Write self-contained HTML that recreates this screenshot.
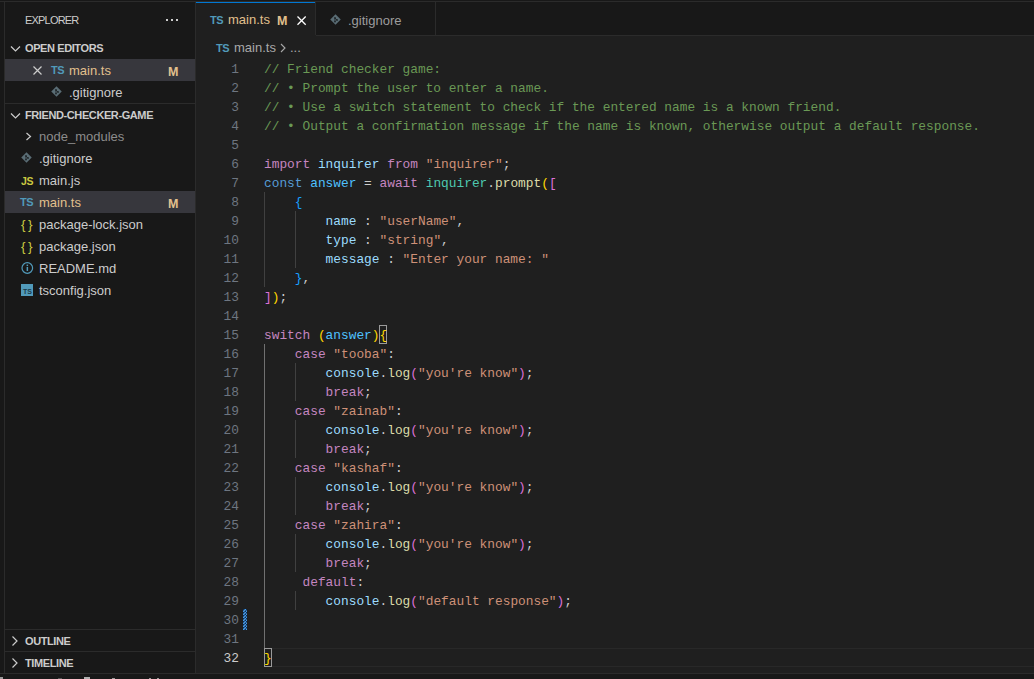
<!DOCTYPE html>
<html><head><meta charset="utf-8">
<style>
*{margin:0;padding:0;box-sizing:border-box}
html,body{width:1034px;height:679px;overflow:hidden;background:#181818}
body{position:relative;font-family:"Liberation Sans",sans-serif;color:#cccccc}
.a{position:absolute;white-space:nowrap}
.t13{font-size:13px;line-height:22px;height:22px}
.hdr{font-size:11px;font-weight:bold;color:#cccccc;line-height:22px;height:22px;letter-spacing:-0.4px}
.mod{color:#e2c08d}
.tsi{color:#519aba;font-weight:bold;font-size:11px;line-height:22px;letter-spacing:-0.5px}
.code{position:absolute;left:264px;font-family:"Liberation Mono",monospace;font-size:12.83px;white-space:pre;height:19px;line-height:19px;margin-top:1px}
.ln{position:absolute;left:196px;width:43px;text-align:right;font-family:"Liberation Mono",monospace;font-size:12.83px;color:#6e7681;height:19px;line-height:19px;margin-top:1px}
.c{color:#6a9955}.k{color:#569cd6}.p{color:#c586c0}.s{color:#ce9178}.v{color:#9cdcfe}.f{color:#dcdcaa}.cl{color:#4ec9b0}.cn{color:#4fc1ff}
.b1{color:#ffd700}.b2{color:#da70d6}.b3{color:#179fff}.w{color:#cccccc}
.act{color:#cccccc}
.g{position:absolute;width:1px;background:#404040}
svg{position:absolute;overflow:visible}
</style></head><body>
<!-- window top border -->
<div class="a" style="left:0;top:1px;width:1034px;height:1px;background:#2b2b2b"></div>
<!-- left border -->
<div class="a" style="left:4px;top:1px;width:1px;height:672px;background:#2b2b2b"></div>
<!-- sidebar right border -->
<div class="a" style="left:195px;top:1px;width:1px;height:672px;background:#2b2b2b"></div>

<!-- SIDEBAR -->
<div class="a t13" style="left:25px;top:9px;font-size:11px;letter-spacing:-0.8px">EXPLORER</div>
<div class="a" style="left:166px;top:19px;width:2px;height:2px;background:#cccccc"></div>
<div class="a" style="left:171px;top:19px;width:2px;height:2px;background:#cccccc"></div>
<div class="a" style="left:176px;top:19px;width:2px;height:2px;background:#cccccc"></div>

<svg style="left:10px;top:44.5px" width="12" height="8"><polyline points="1,1.5 5.5,6 10,1.5" fill="none" stroke="#cccccc" stroke-width="1.2"/></svg>
<div class="a hdr" style="left:25px;top:37px">OPEN EDITORS</div>

<div class="a" style="left:5px;top:59px;width:190px;height:22px;background:#37373d"></div>
<svg style="left:33px;top:66px" width="9" height="9"><path d="M0.5,0.5 L8.5,8.5 M8.5,0.5 L0.5,8.5" stroke="#cccccc" stroke-width="1.2"/></svg>
<div class="a tsi" style="left:51px;top:59px">TS</div>
<div class="a t13 mod" style="left:69px;top:60px">main.ts</div>
<div class="a t13 mod" style="left:168px;top:61px;font-weight:bold;font-size:12.5px">M</div>

<svg style="left:51px;top:86px" width="11" height="11"><rect x="1.8" y="1.8" width="7.4" height="7.4" transform="rotate(45 5.5 5.5)" fill="#5a6d75"/><circle cx="5" cy="4" r="0.9" fill="#1f2428"/><circle cx="7" cy="6" r="0.9" fill="#1f2428"/><circle cx="5" cy="7.6" r="0.9" fill="#1f2428"/><path d="M5,4 L5,7.6 M5,4 L7,6" stroke="#1f2428" stroke-width="0.9"/></svg>
<div class="a t13" style="left:69px;top:82px">.gitignore</div>

<div class="a" style="left:5px;top:103px;width:190px;height:1px;background:#2b2b2b"></div>
<svg style="left:10px;top:111.5px" width="12" height="8"><polyline points="1,1.5 5.5,6 10,1.5" fill="none" stroke="#cccccc" stroke-width="1.2"/></svg>
<div class="a hdr" style="left:25px;top:104px">FRIEND-CHECKER-GAME</div>

<svg style="left:25px;top:132px" width="8" height="10"><polyline points="1.5,1 5.5,4.5 1.5,8" fill="none" stroke="#cccccc" stroke-width="1.2"/></svg>
<div class="a t13" style="left:39px;top:126px;color:#8c8c8c">node_modules</div>

<svg style="left:21px;top:152px" width="11" height="11"><rect x="1.8" y="1.8" width="7.4" height="7.4" transform="rotate(45 5.5 5.5)" fill="#5a6d75"/><circle cx="5" cy="4" r="0.9" fill="#1f2428"/><circle cx="7" cy="6" r="0.9" fill="#1f2428"/><circle cx="5" cy="7.6" r="0.9" fill="#1f2428"/><path d="M5,4 L5,7.6 M5,4 L7,6" stroke="#1f2428" stroke-width="0.9"/></svg>
<div class="a t13" style="left:39px;top:148px">.gitignore</div>

<div class="a" style="left:21px;top:170px;color:#cbcb41;font-weight:bold;font-size:10.5px;line-height:22px;letter-spacing:-0.4px">JS</div>
<div class="a t13" style="left:39px;top:170px">main.js</div>

<div class="a" style="left:5px;top:191px;width:190px;height:22px;background:#37373d"></div>
<div class="a tsi" style="left:20px;top:191px">TS</div>
<div class="a t13 mod" style="left:39px;top:192px">main.ts</div>
<div class="a t13 mod" style="left:168px;top:193px;font-weight:bold;font-size:12.5px">M</div>

<div class="a" style="left:21px;top:214px;color:#cbcb41;font-size:13.5px;line-height:22px;letter-spacing:2.5px;font-weight:normal">{}</div>
<div class="a t13" style="left:39px;top:214px">package-lock.json</div>
<div class="a" style="left:21px;top:236px;color:#cbcb41;font-size:13.5px;line-height:22px;letter-spacing:2.5px;font-weight:normal">{}</div>
<div class="a t13" style="left:39px;top:236px">package.json</div>

<svg style="left:21px;top:262px" width="13" height="13"><circle cx="6.3" cy="6" r="5.3" fill="none" stroke="#519aba" stroke-width="1.2"/><rect x="5.6" y="2.6" width="1.5" height="1.5" fill="#519aba"/><rect x="5.6" y="5" width="1.5" height="4" fill="#519aba"/></svg>
<div class="a t13" style="left:39px;top:258px">README.md</div>

<div class="a" style="left:21px;top:284px;width:12px;height:12px;background:#519aba"></div>
<div class="a" style="left:23px;top:288px;color:#1b3a4b;font-size:7px;line-height:8px;font-weight:bold">TS</div>
<div class="a t13" style="left:39px;top:280px">tsconfig.json</div>

<div class="a" style="left:5px;top:629px;width:190px;height:1px;background:#2b2b2b"></div>
<svg style="left:11px;top:636px" width="8" height="10"><polyline points="1.5,0.5 6,5 1.5,9.5" fill="none" stroke="#cccccc" stroke-width="1.2"/></svg>
<div class="a hdr" style="left:25px;top:630px">OUTLINE</div>
<div class="a" style="left:5px;top:651px;width:190px;height:1px;background:#2b2b2b"></div>
<svg style="left:11px;top:658px" width="8" height="10"><polyline points="1.5,0.5 6,5 1.5,9.5" fill="none" stroke="#cccccc" stroke-width="1.2"/></svg>
<div class="a hdr" style="left:25px;top:652px">TIMELINE</div>

<!-- TABS -->
<div class="a" style="left:196px;top:2px;width:838px;height:33px;background:#181818"></div>
<div class="a" style="left:196px;top:35px;width:838px;height:1px;background:#2b2b2b"></div>
<div class="a" style="left:196px;top:2px;width:120px;height:34px;background:#1f1f1f"></div>
<div class="a" style="left:196px;top:2px;width:120px;height:1px;background:#0078d4"></div>
<div class="a" style="left:315px;top:2px;width:1px;height:33px;background:#2b2b2b"></div>
<div class="a" style="left:435px;top:2px;width:1px;height:33px;background:#2b2b2b"></div>
<div class="a tsi" style="left:210px;top:9px">TS</div>
<div class="a t13 mod" style="left:228px;top:9px">main.ts</div>
<div class="a t13 mod" style="left:277px;top:10px;font-weight:bold;font-size:12.5px">M</div>
<svg style="left:297px;top:15.5px" width="10" height="10"><path d="M0.5,0.5 L8.7,8.7 M8.7,0.5 L0.5,8.7" stroke="#ffffff" stroke-width="1.3"/></svg>
<svg style="left:330px;top:14px" width="11" height="11"><rect x="1.8" y="1.8" width="7.4" height="7.4" transform="rotate(45 5.5 5.5)" fill="#5a6d75"/><circle cx="5" cy="4" r="0.9" fill="#1f2428"/><circle cx="7" cy="6" r="0.9" fill="#1f2428"/><circle cx="5" cy="7.6" r="0.9" fill="#1f2428"/><path d="M5,4 L5,7.6 M5,4 L7,6" stroke="#1f2428" stroke-width="0.9"/></svg>
<div class="a t13" style="left:348px;top:10px;color:#9d9d9d">.gitignore</div>

<!-- EDITOR -->
<div class="a" style="left:196px;top:36px;width:838px;height:637px;background:#1f1f1f"></div>
<div class="a tsi" style="left:216px;top:37px;">TS</div>
<div class="a t13" style="left:234px;top:37px;color:#a9a9a9">main.ts</div>
<svg style="left:280px;top:43px" width="7" height="10"><polyline points="1,1 5,5 1,9" fill="none" stroke="#a9a9a9" stroke-width="1.1"/></svg>
<div class="a t13" style="left:290px;top:37px;color:#a9a9a9">...</div>

<!-- line highlight -->
<div class="a" style="left:264px;top:648px;width:770px;height:1px;background:#282828"></div>
<div class="a" style="left:264px;top:666px;width:770px;height:1px;background:#282828"></div>
<!-- indent guides -->
<div class="g" style="left:264px;top:192px;height:95px"></div>
<div class="g" style="left:295px;top:211px;height:57px"></div>
<div class="g" style="left:264px;top:344px;height:304px;background:#707070"></div>
<div class="g" style="left:295px;top:363px;height:38px"></div>
<div class="g" style="left:295px;top:420px;height:38px"></div>
<div class="g" style="left:295px;top:477px;height:38px"></div>
<div class="g" style="left:295px;top:534px;height:38px"></div>
<div class="g" style="left:295px;top:591px;height:19px"></div>
<!-- bracket match boxes -->
<div class="a" style="left:379px;top:325px;width:8px;height:19px;border:1px solid #9a9a9a"></div>
<div class="a" style="left:264px;top:648px;width:8px;height:19px;border:1px solid #9a9a9a"></div>
<!-- dirty gutter -->
<svg style="left:243px;top:609px" width="4" height="21"><defs><pattern id="hp" width="3" height="3" patternUnits="userSpaceOnUse"><rect width="3" height="3" fill="#0b2e55"/><path d="M-1,4 L4,-1" stroke="#4a9be6" stroke-width="1.4"/></pattern></defs><rect width="4" height="21" fill="url(#hp)"/></svg>

<div class="ln" style="top:59px">1</div>
<div class="code" style="top:59px"><span class="c">// Friend checker game:</span></div>
<div class="ln" style="top:78px">2</div>
<div class="code" style="top:78px"><span class="c">// • Prompt the user to enter a name.</span></div>
<div class="ln" style="top:97px">3</div>
<div class="code" style="top:97px"><span class="c">// • Use a switch statement to check if the entered name is a known friend.</span></div>
<div class="ln" style="top:116px">4</div>
<div class="code" style="top:116px"><span class="c">// • Output a confirmation message if the name is known, otherwise output a default response.</span></div>
<div class="ln" style="top:135px">5</div>
<div class="ln" style="top:154px">6</div>
<div class="code" style="top:154px"><span class="p">import</span><span class="w"> </span><span class="v">inquirer</span><span class="w"> </span><span class="p">from</span><span class="w"> </span><span class="s">"inquirer"</span><span class="w">;</span></div>
<div class="ln" style="top:173px">7</div>
<div class="code" style="top:173px"><span class="k">const</span><span class="w"> </span><span class="cn">answer</span><span class="w"> = </span><span class="p">await</span><span class="w"> </span><span class="cl">inquirer</span><span class="w">.</span><span class="f">prompt</span><span class="b1">(</span><span class="b2">[</span></div>
<div class="ln" style="top:192px">8</div>
<div class="code" style="top:192px"><span class="w">    </span><span class="b3">{</span></div>
<div class="ln" style="top:211px">9</div>
<div class="code" style="top:211px"><span class="w">        </span><span class="v">name</span><span class="w"> : </span><span class="s">"userName"</span><span class="w">,</span></div>
<div class="ln" style="top:230px">10</div>
<div class="code" style="top:230px"><span class="w">        </span><span class="v">type</span><span class="w"> : </span><span class="s">"string"</span><span class="w">,</span></div>
<div class="ln" style="top:249px">11</div>
<div class="code" style="top:249px"><span class="w">        </span><span class="v">message</span><span class="w"> : </span><span class="s">"Enter your name: "</span></div>
<div class="ln" style="top:268px">12</div>
<div class="code" style="top:268px"><span class="w">    </span><span class="b3">}</span><span class="w">,</span></div>
<div class="ln" style="top:287px">13</div>
<div class="code" style="top:287px"><span class="b2">]</span><span class="b1">)</span><span class="w">;</span></div>
<div class="ln" style="top:306px">14</div>
<div class="ln" style="top:325px">15</div>
<div class="code" style="top:325px"><span class="p">switch</span><span class="w"> </span><span class="b1">(</span><span class="cn">answer</span><span class="b1">)</span><span class="b1 box">{</span></div>
<div class="ln" style="top:344px">16</div>
<div class="code" style="top:344px"><span class="w">    </span><span class="p">case</span><span class="w"> </span><span class="s">"tooba"</span><span class="w">:</span></div>
<div class="ln" style="top:363px">17</div>
<div class="code" style="top:363px"><span class="w">        </span><span class="v">console</span><span class="w">.</span><span class="f">log</span><span class="b2">(</span><span class="s">"you're know"</span><span class="b2">)</span><span class="w">;</span></div>
<div class="ln" style="top:382px">18</div>
<div class="code" style="top:382px"><span class="w">        </span><span class="p">break</span><span class="w">;</span></div>
<div class="ln" style="top:401px">19</div>
<div class="code" style="top:401px"><span class="w">    </span><span class="p">case</span><span class="w"> </span><span class="s">"zainab"</span><span class="w">:</span></div>
<div class="ln" style="top:420px">20</div>
<div class="code" style="top:420px"><span class="w">        </span><span class="v">console</span><span class="w">.</span><span class="f">log</span><span class="b2">(</span><span class="s">"you're know"</span><span class="b2">)</span><span class="w">;</span></div>
<div class="ln" style="top:439px">21</div>
<div class="code" style="top:439px"><span class="w">        </span><span class="p">break</span><span class="w">;</span></div>
<div class="ln" style="top:458px">22</div>
<div class="code" style="top:458px"><span class="w">    </span><span class="p">case</span><span class="w"> </span><span class="s">"kashaf"</span><span class="w">:</span></div>
<div class="ln" style="top:477px">23</div>
<div class="code" style="top:477px"><span class="w">        </span><span class="v">console</span><span class="w">.</span><span class="f">log</span><span class="b2">(</span><span class="s">"you're know"</span><span class="b2">)</span><span class="w">;</span></div>
<div class="ln" style="top:496px">24</div>
<div class="code" style="top:496px"><span class="w">        </span><span class="p">break</span><span class="w">;</span></div>
<div class="ln" style="top:515px">25</div>
<div class="code" style="top:515px"><span class="w">    </span><span class="p">case</span><span class="w"> </span><span class="s">"zahira"</span><span class="w">:</span></div>
<div class="ln" style="top:534px">26</div>
<div class="code" style="top:534px"><span class="w">        </span><span class="v">console</span><span class="w">.</span><span class="f">log</span><span class="b2">(</span><span class="s">"you're know"</span><span class="b2">)</span><span class="w">;</span></div>
<div class="ln" style="top:553px">27</div>
<div class="code" style="top:553px"><span class="w">        </span><span class="p">break</span><span class="w">;</span></div>
<div class="ln" style="top:572px">28</div>
<div class="code" style="top:572px"><span class="w">     </span><span class="p">default</span><span class="w">:</span></div>
<div class="ln" style="top:591px">29</div>
<div class="code" style="top:591px"><span class="w">        </span><span class="v">console</span><span class="w">.</span><span class="f">log</span><span class="b2">(</span><span class="s">"default response"</span><span class="b2">)</span><span class="w">;</span></div>
<div class="ln" style="top:610px">30</div>
<div class="ln" style="top:629px">31</div>
<div class="ln act" style="top:648px">32</div>
<div class="code" style="top:648px"><span class="b1 box">}</span></div>

<!-- bottom panel strip -->
<div class="a" style="left:0;top:673px;width:1034px;height:1px;background:#2b2b2b"></div>
<div class="a" style="left:0;top:674px;width:1034px;height:5px;background:#181818"></div>
<div class="a" style="left:0;top:677px;width:3px;height:2px;background:#9a9a9a"></div>
<div class="a" style="left:58px;top:678px;width:4px;height:1px;background:#555"></div>
<div class="a" style="left:84px;top:677px;width:6px;height:2px;background:#b0b0b0"></div>
<div class="a" style="left:112px;top:678px;width:3px;height:1px;background:#999"></div>
<div class="a" style="left:149px;top:678px;width:2px;height:1px;background:#999"></div>
<div class="a" style="left:157px;top:678px;width:2px;height:1px;background:#999"></div>
</body></html>
